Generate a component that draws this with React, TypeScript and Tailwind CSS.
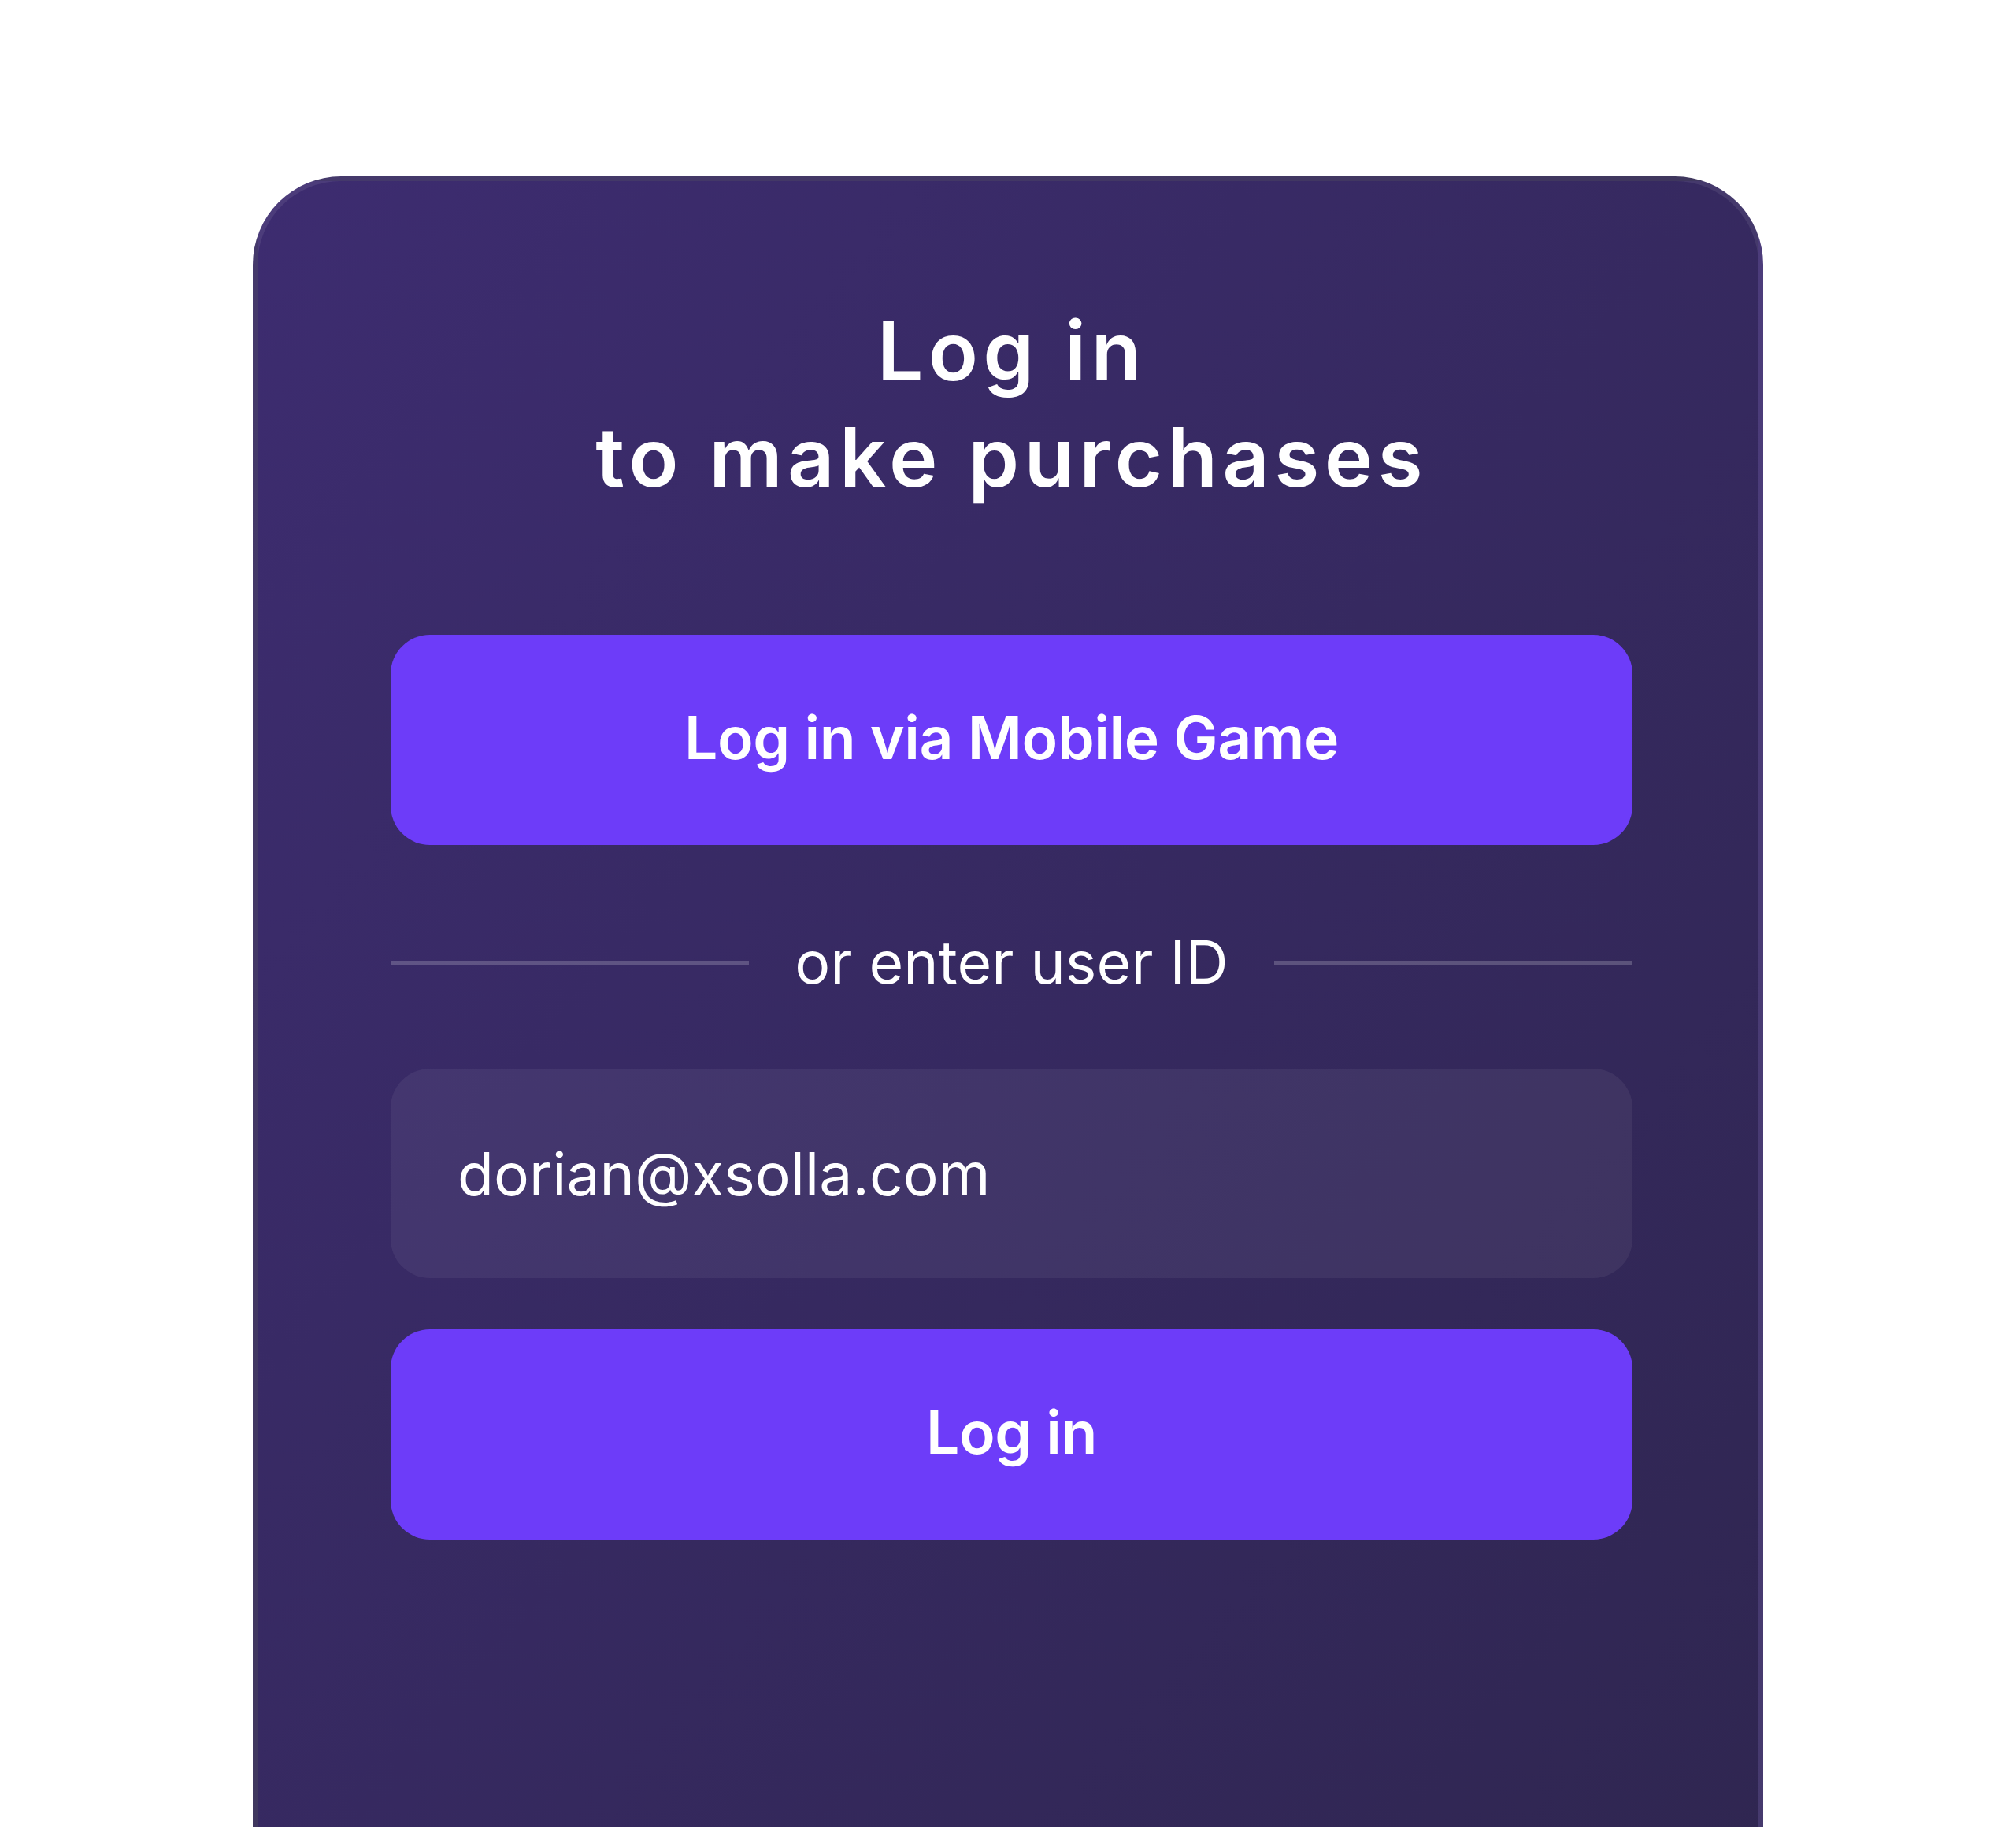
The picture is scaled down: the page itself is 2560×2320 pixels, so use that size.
import React from "react";

const font = { fontFamily: "Inter, 'Noto Sans', sans-serif" };

function PrimaryButton({ label }: { label: string }) {
  return (
    <button className="flex h-[267px] w-full items-center justify-center rounded-[50px] bg-[#6d3cf9] pb-[6px] text-[75px] font-semibold leading-none tracking-[-0.005em] text-white">
      {label}
    </button>
  );
}

export default function App() {
  return (
    <div className="h-[2320px] overflow-hidden bg-white" style={font}>
      <div className="mx-auto mt-[224px] h-[2300px] w-[1918px] rounded-[112px] border-[6px] border-white/[0.08] bg-linear-to-br from-[#3d2c70] to-[#2f2650] pl-[169px] pr-[160px] pt-[148px]">
        <h1 className="text-center text-[104px] font-semibold leading-[135px] tracking-[0.06em] text-white">
          Log in
          <br />
          to make purchases
        </h1>

        <div className="mt-[158px]">
          <PrimaryButton label="Log in via Mobile Game" />
        </div>

        <div className="mt-[104px] flex h-[90px] items-center gap-[58px]">
          <div className="h-[5px] flex-1 bg-white/20" />
          <span className="text-[75px] leading-[90px] text-white">or enter user ID</span>
          <div className="h-[5px] flex-1 bg-white/20" />
        </div>

        <div className="mt-[90px] flex h-[266px] items-center rounded-[50px] bg-white/[0.06] px-[85px]">
          <span className="text-[75px] leading-none text-white">dorian@xsolla.com</span>
        </div>

        <div className="mt-[65px]">
          <PrimaryButton label="Log in" />
        </div>
      </div>
    </div>
  );
}
